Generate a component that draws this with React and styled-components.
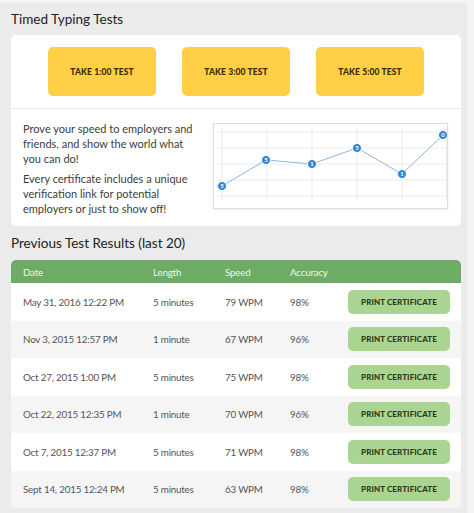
import React from "react";
import styled, { createGlobalStyle } from "styled-components";

const GlobalStyle = createGlobalStyle`
  html, body {
    margin: 0;
    padding: 0;
    background: #f4f4f4;
  }
  body {
    font-family: Lato, "Open Sans", sans-serif;
    color: #444;
  }
`;

const Panel = styled.div`
  width: 467px;
  height: 510px;
  margin-top: 3px;
  background: #ebebeb;
  padding: 0 6px 0 11px;
  box-sizing: border-box;
  overflow: hidden;
`;

const Heading = styled.h2`
  margin: 0;
  height: ${(p) => p.$h}px;
  display: flex;
  align-items: center;
  font-size: 13.5px;
  font-weight: 400;
  color: #222;
`;

const Card = styled.div`
  background: #fff;
  border-radius: 5px;
  overflow: hidden;
`;

const ButtonRow = styled.div`
  display: flex;
  justify-content: center;
  gap: 26px;
  padding: 12px 0;
  border-bottom: 1px solid #e6e6ef;
`;

const TestButton = styled.button`
  width: 108px;
  height: 49px;
  border: none;
  border-radius: 5px;
  background: #ffcf45;
  color: #3b2a00;
  font-family: inherit;
  font-weight: 900;
  font-size: 8.5px;
  letter-spacing: 0.1px;
`;

const Info = styled.div`
  display: flex;
  justify-content: space-between;
  padding: 12px 13px 10px 12px;
`;

const Blurb = styled.div`
  width: 180px;
  font-size: 11px;
  line-height: 15px;
  color: #3d3d3d;
  p {
    margin: 0 0 5px;
  }
  p:last-child {
    margin-bottom: 0;
  }
`;

const ChartBox = styled.div`
  width: 235px;
  height: 86px;
  margin-top: 2px;
  border: 1px solid #dedede;
  box-shadow: 0 1px 2px rgba(0, 0, 0, 0.08);
  box-sizing: border-box;
  background: #fff;
`;

const Table = styled.div`
  border-radius: 5px;
  overflow: hidden;
  background: #fff;
`;

const Row = styled.div`
  display: grid;
  grid-template-columns: 130px 72px 65px 1fr auto;
  align-items: center;
  height: ${(p) => (p.$head ? "23px" : "37.5px")};
  padding: 0 11px 0 12px;
  background: ${(p) => (p.$head ? "#6cac64" : p.$alt ? "#f5f5f5" : "#fff")};
  color: ${(p) => (p.$head ? "#eef6ea" : "#555")};
  font-size: 9.8px;
  letter-spacing: -0.2px;
`;

const PrintButton = styled.button`
  width: 102px;
  height: 24px;
  border: none;
  border-radius: 5px;
  background: #a9d590;
  color: #2c3b1c;
  font-family: inherit;
  font-weight: 900;
  font-size: 8px;
  letter-spacing: 0.1px;
`;

const points = [
  [8, 62, "5"],
  [52, 36, "5"],
  [98, 40, "1"],
  [143, 24, "5"],
  [188, 50, "1"],
  [229, 11, "0"],
];

const Chart = () => (
  <svg width="233" height="84" viewBox="0 0 233 84">
    {[8, 24, 40, 56, 72].map((y) => (
      <line key={y} x1="4" x2="233" y1={y} y2={y} stroke="#ececec" strokeWidth="1" />
    ))}
    {[8, 53, 98, 143, 188, 232].map((x) => (
      <line key={x} x1={x} x2={x} y1="4" y2="76" stroke="#ececec" strokeWidth="1" />
    ))}
    <polyline
      points={points.map(([x, y]) => `${x},${y}`).join(" ")}
      fill="none"
      stroke="#8fb6dc"
      strokeWidth="1"
    />
    {points.map(([x, y, n], i) => (
      <g key={i}>
        <circle cx={x} cy={y} r="4.5" fill="#2f86d6" stroke="#fff" strokeWidth="1" />
        <text
          x={x}
          y={y + 2.2}
          fontSize="6"
          fontWeight="700"
          textAnchor="middle"
          fill="#fff"
          fontFamily="Lato, sans-serif"
        >
          {n}
        </text>
      </g>
    ))}
  </svg>
);

const results = [
  ["May 31, 2016 12:22 PM", "5 minutes", "79 WPM", "98%"],
  ["Nov 3, 2015 12:57 PM", "1 minute", "67 WPM", "96%"],
  ["Oct 27, 2015 1:00 PM", "5 minutes", "75 WPM", "98%"],
  ["Oct 22, 2015 12:35 PM", "1 minute", "70 WPM", "96%"],
  ["Oct 7, 2015 12:37 PM", "5 minutes", "71 WPM", "98%"],
  ["Sept 14, 2015 12:24 PM", "5 minutes", "63 WPM", "98%"],
];

export default function App() {
  return (
    <>
      <GlobalStyle />
      <Panel>
        <Heading $h={32}>Timed Typing Tests</Heading>
        <Card>
          <ButtonRow>
            <TestButton>TAKE 1:00 TEST</TestButton>
            <TestButton>TAKE 3:00 TEST</TestButton>
            <TestButton>TAKE 5:00 TEST</TestButton>
          </ButtonRow>
          <Info>
            <Blurb>
              <p>Prove your speed to employers and friends, and show the world what you can do!</p>
              <p>Every certificate includes a unique verification link for potential employers or just to show off!</p>
            </Blurb>
            <ChartBox>
              <Chart />
            </ChartBox>
          </Info>
        </Card>
        <Heading $h={34}>Previous Test Results (last 20)</Heading>
        <Table>
          <Row $head>
            <span>Date</span>
            <span>Length</span>
            <span>Speed</span>
            <span>Accuracy</span>
            <span />
          </Row>
          {results.map((r, i) => (
            <Row key={i} $alt={i % 2 === 1}>
              <span>{r[0]}</span>
              <span>{r[1]}</span>
              <span>{r[2]}</span>
              <span>{r[3]}</span>
              <PrintButton>PRINT CERTIFICATE</PrintButton>
            </Row>
          ))}
        </Table>
      </Panel>
    </>
  );
}
